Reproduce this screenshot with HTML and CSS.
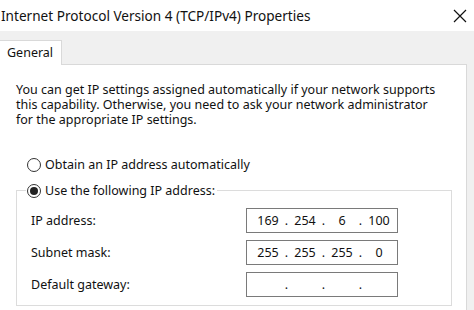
FILE: index.html
```html
<!DOCTYPE html>
<html lang="en">
<head>
  <meta charset="UTF-8">
  <title>Internet Protocol Version 4 (TCP/IPv4) Properties</title>
  <link rel="stylesheet" href="styles.css">
</head>
<body>
  <div class="titlebar">
    <span class="title">Internet Protocol Version 4 (TCP/IPv4) Properties</span>
    <svg class="close" width="14" height="14" viewBox="0 0 14 14">
      <path d="M1 1 L13 13 M13 1 L1 13" stroke="#111" stroke-width="1.2" fill="none"/>
    </svg>
  </div>

  <div class="dialog">
    <div class="tabs">
      <div class="tab">General</div>
    </div>

    <div class="panel">
      <p class="intro">You can get IP settings assigned automatically if your network supports<br>
        this capability. Otherwise, you need to ask your network administrator<br>
        for the appropriate IP settings.</p>

      <label class="option auto">
        <input type="radio" name="mode">
        Obtain an IP address automatically
      </label>

      <fieldset class="group">
        <legend>
          <label class="option">
            <input type="radio" name="mode" checked>
            Use the following IP address:
          </label>
        </legend>

        <div class="rows">
          <span class="field-label">IP address:</span>
          <div class="ip-box">
            <span class="octet">169</span><span class="dot">.</span>
            <span class="octet">254</span><span class="dot">.</span>
            <span class="octet">6</span><span class="dot">.</span>
            <span class="octet">100</span>
          </div>

          <span class="field-label">Subnet mask:</span>
          <div class="ip-box">
            <span class="octet">255</span><span class="dot">.</span>
            <span class="octet">255</span><span class="dot">.</span>
            <span class="octet">255</span><span class="dot">.</span>
            <span class="octet">0</span>
          </div>

          <span class="field-label">Default gateway:</span>
          <div class="ip-box">
            <span class="octet"></span><span class="dot">.</span>
            <span class="octet"></span><span class="dot">.</span>
            <span class="octet"></span><span class="dot">.</span>
            <span class="octet"></span>
          </div>
        </div>
      </fieldset>
    </div>
  </div>
</body>
</html>
```

FILE: styles.css
```css
* {
  margin: 0;
  padding: 0;
  box-sizing: border-box;
}

body {
  font-family: 'Noto Sans', 'Open Sans', sans-serif;
  font-size: 12.5px;
  color: #111;
  background-color: #f0f0f0;
  width: 474px;
  height: 310px;
  overflow: hidden;
}

/* Title bar */
.titlebar {
  height: 31px;
  background-color: #fff;
  display: flex;
  justify-content: space-between;
  align-items: center;
  padding: 0 7px 0 1px;
}

.title {
  font-size: 13.6px;
}

.close {
  display: block;
}

/* Tabs */
.dialog {
  padding-right: 7px;
}

.tabs {
  display: flex;
  padding-top: 9px;
}

.tab {
  width: 62px;
  height: 25px;
  background-color: #fff;
  border: 1px solid #d9d9d9;
  border-left: none;
  border-bottom: none;
  margin-bottom: -1px;
  position: relative;
  padding-left: 7px;
  line-height: 24px;
}

.panel {
  background-color: #fff;
  border: 1px solid #d9d9d9;
  border-left: none;
  height: 260px;
  padding: 17px 0 0 16px;
}

.intro {
  line-height: 15px;
  white-space: nowrap;
}

/* Radio options */
.option {
  display: flex;
  align-items: center;
  gap: 4px;
  line-height: 15px;
}

.option input {
  appearance: none;
  width: 14px;
  height: 14px;
  border: 1px solid #333;
  border-radius: 50%;
  display: grid;
  place-items: center;
}

.option input:checked::after {
  content: '';
  width: 8px;
  height: 8px;
  border-radius: 50%;
  background-color: #222;
}

.auto {
  margin: 30px 0 0 11px;
}

/* Group box */
.group {
  width: 436px;
  margin-top: 11px;
  border: 1px solid #dcdcdc;
  padding: 0;
}

.group legend {
  margin-left: 9px;
  padding: 0 2px 0 1px;
}

.rows {
  display: grid;
  grid-template-columns: 215px 152px;
  row-gap: 7px;
  align-items: center;
  padding: 10px 0 8px 14px;
}

.ip-box {
  height: 25px;
  border: 1px solid #7a7a7a;
  display: flex;
  align-items: center;
  padding-left: 5px;
}

.octet {
  width: 32px;
  text-align: center;
}

.dot {
  width: 5px;
  text-align: center;
}
```
